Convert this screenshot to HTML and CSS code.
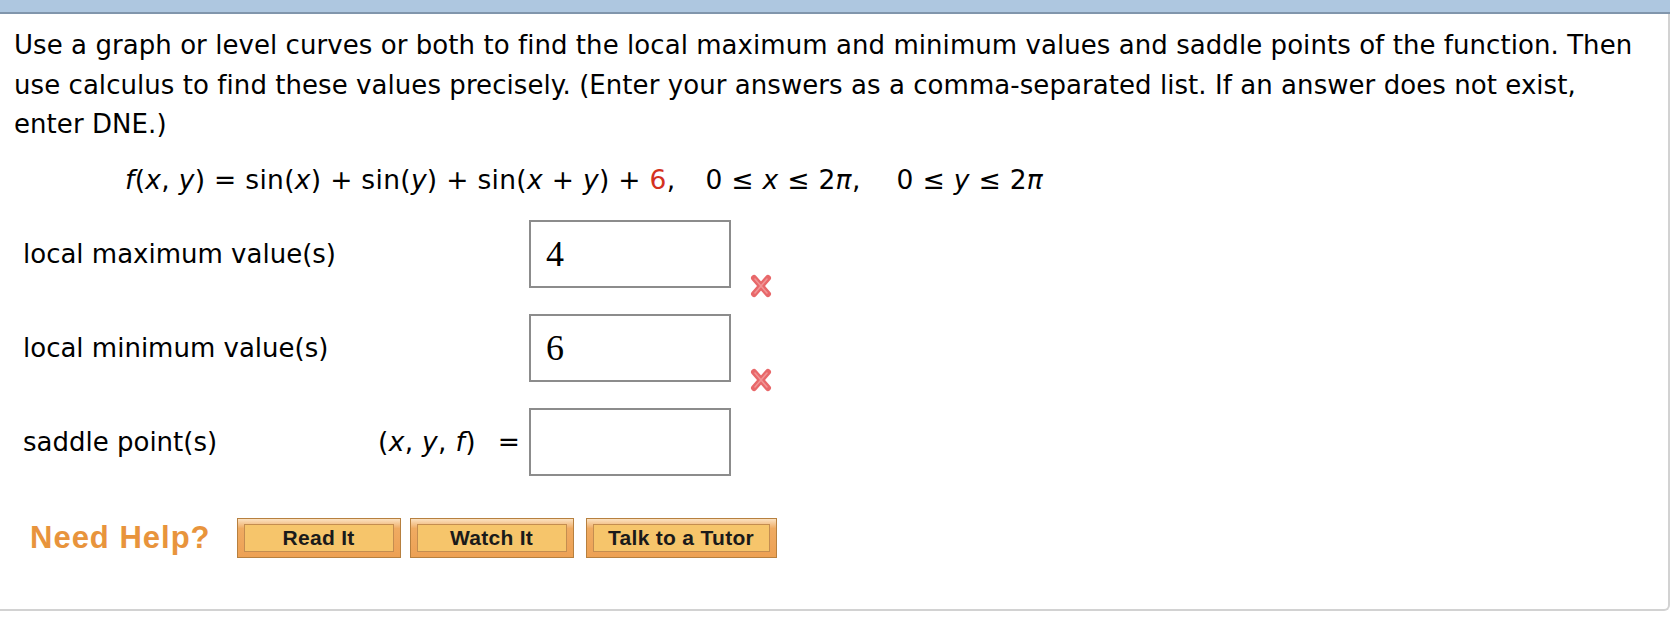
FILE: index.html
```html
<!DOCTYPE html>
<html>
<head>
<meta charset="utf-8">
<link rel="stylesheet" href="styles.css">
</head>
<body>
<div class="card">
  <div class="band"></div>
  <div class="content">
    <p class="question">Use a graph or level curves or both to find the local maximum and minimum values and saddle points of the function. Then use calculus to find these values precisely. (Enter your answers as a comma-separated list. If an answer does not exist, enter DNE.)</p>
    <p class="formula"><i>f</i>(<i>x</i>, <i>y</i>) = sin(<i>x</i>) + sin(<i>y</i>) + sin(<i>x</i> + <i>y</i>) + <span class="red">6</span>,<span class="gap">0 ≤ <i>x</i> ≤ 2<i>π</i>,</span><span class="gap gap2">0 ≤ <i>y</i> ≤ 2<i>π</i></span></p>
    <div class="answers">
      <div class="label">local maximum value(s)</div>
      <div class="expr"></div>
      <div class="box"><span class="val">4</span></div>
      <div class="mark"><svg width="22" height="24" viewBox="0 0 22 24"><g stroke="#e8686a" stroke-width="6" stroke-linecap="round"><line x1="4" y1="4" x2="18" y2="20"/><line x1="18" y1="4" x2="4" y2="20"/></g><g stroke="#f4a0a0" stroke-width="1.6" stroke-linecap="round" opacity="0.8"><line x1="5" y1="5" x2="17" y2="19"/><line x1="17" y1="5" x2="5" y2="19"/></g></svg></div>

      <div class="label">local minimum value(s)</div>
      <div class="expr"></div>
      <div class="box"><span class="val">6</span></div>
      <div class="mark"><svg width="22" height="24" viewBox="0 0 22 24"><g stroke="#e8686a" stroke-width="6" stroke-linecap="round"><line x1="4" y1="4" x2="18" y2="20"/><line x1="18" y1="4" x2="4" y2="20"/></g><g stroke="#f4a0a0" stroke-width="1.6" stroke-linecap="round" opacity="0.8"><line x1="5" y1="5" x2="17" y2="19"/><line x1="17" y1="5" x2="5" y2="19"/></g></svg></div>

      <div class="label">saddle point(s)</div>
      <div class="expr">(<i>x</i>, <i>y</i>, <i>f</i>)<span class="eq">=</span></div>
      <div class="box"></div>
      <div class="mark"></div>
    </div>
    <div class="help">
      <span class="need">Need Help?</span>
      <span class="btn"><span class="btn-in">Read It</span></span>
      <span class="btn"><span class="btn-in">Watch It</span></span>
      <span class="btn btn-wide"><span class="btn-in">Talk to a Tutor</span></span>
    </div>
  </div>
</div>
</body>
</html>
```

FILE: styles.css
```css
html, body {
  margin: 0;
  padding: 0;
  background: #fff;
}
body {
  font-family: "DejaVu Sans", Verdana, sans-serif;
  color: #000;
}
.card {
  width: 1668px;
  border-right: 2px solid #d2d2d2;
  border-bottom: 2px solid #d2d2d2;
  border-bottom-right-radius: 6px;
  height: 609px;
}
.band {
  height: 12px;
  background: #aec7e0;
  border-bottom: 2px solid #8196ac;
  margin-right: -2px;
}
.content {
  padding-top: 12px;
}
.question {
  margin: 0;
  padding: 0 20px 0 14px;
  font-size: 26px;
  letter-spacing: 0.06px;
  line-height: 39.5px;
}
.formula {
  margin: 15px 0 0 0;
  padding-left: 125px;
  font-size: 26.5px;
  letter-spacing: 0.3px;
  line-height: 40px;
  white-space: nowrap;
}
.red { color: #d4311f; }
.gap { margin-left: 30px; }
.gap2 { margin-left: 36px; }
.answers {
  margin-top: 20px;
  padding-left: 23px;
  display: grid;
  grid-template-columns: 355px 151px 202px 40px;
  grid-template-rows: 68px 68px 68px;
  row-gap: 26px;
  font-size: 26px;
}
.label, .expr {
  align-self: center;
}
.expr {
  text-align: right;
  padding-right: 17px;
  white-space: nowrap;
  font-size: 26.5px;
  letter-spacing: 0.3px;
}
.eq { margin-left: 22px; }
.box {
  border: 2px solid #8c8c8c;
  box-sizing: border-box;
  height: 68px;
  display: flex;
  align-items: center;
  padding-left: 15px;
}
.val {
  font-family: "Liberation Serif", "Times New Roman", serif;
  font-size: 36px;
}
.mark {
  align-self: start;
  margin-top: 54px;
  padding-left: 19px;
}
.help {
  margin-top: 42px;
  padding-left: 30px;
  display: flex;
  align-items: center;
  height: 40px;
}
.need {
  font-family: "Liberation Sans", Arial, sans-serif;
  font-weight: bold;
  font-size: 31px;
  letter-spacing: 1px;
  color: #e8943c;
  margin-right: 26px;
}
.btn {
  box-sizing: border-box;
  width: 164px;
  height: 40px;
  border: 1px solid #b7803f;
  padding: 5px 6px;
  background: linear-gradient(#fbe2c2 0%, #efab62 25%, #eda154 100%);
  display: flex;
  margin-right: 9px;
}
.btn + .btn + .btn { margin-left: 3px; }
.btn-wide { width: 191px; }
.btn-in {
  flex: 1;
  border: 1px solid #c48d50;
  background: #f6c56b;
  display: flex;
  align-items: center;
  justify-content: center;
  font-family: "Liberation Sans", Arial, sans-serif;
  font-weight: bold;
  font-size: 21px;
  letter-spacing: 0.3px;
  color: #1a1a1a;
}
```
